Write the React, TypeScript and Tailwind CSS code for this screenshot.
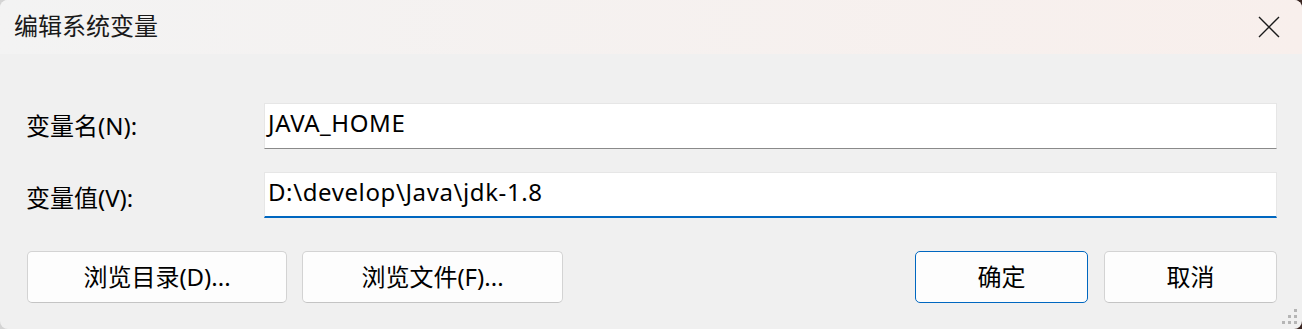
import React from 'react'

const uiFont = {
  fontFamily: '"Noto Sans", "Noto Sans CJK SC", sans-serif',
}

function CloseIcon() {
  return (
    <svg width="22" height="22" viewBox="0 0 22 22" className="text-[#1a1a1a]">
      <path d="M1 1 L21 21 M21 1 L1 21" stroke="currentColor" strokeWidth="1.4" fill="none" />
    </svg>
  )
}

function Field({ value, focused }: { value: string; focused?: boolean }) {
  return (
    <div
      className={
        'flex-1 h-[46px] bg-white border border-[#e6e6e6] flex items-center pl-[3px] text-[24px] tracking-[0.6px] text-black ' +
        (focused ? 'border-b-2 border-b-[#0067c0]' : 'border-b-[#8a8a8a]')
      }
    >
      <span className="leading-none -mt-[6px]">{value}</span>
    </div>
  )
}

function Button({ label, primary, className }: { label: string; primary?: boolean; className?: string }) {
  return (
    <button
      className={
        'h-[52px] rounded-[5px] bg-[#fdfdfd] text-[24px] text-black flex items-center justify-center ' +
        (primary ? 'border border-[#0067c0] ' : 'border border-[#d3d3d3] border-b-[#c4c4c4] ') +
        (className ?? '')
      }
    >
      {label}
    </button>
  )
}

export default function App() {
  return (
    <div className="w-[1302px] h-[329px] bg-gradient-to-r from-[#d4d4d4] via-[#9a8f8b] to-[#3a2622]" style={uiFont}>
      <div className="relative w-full h-full rounded-[8px] overflow-hidden bg-[#f0f0f0] flex flex-col">
        {/* Title bar */}
        <div className="h-[54px] shrink-0 bg-gradient-to-r from-[#f3f3f3] to-[#f8efec] flex items-center justify-between pl-[14px] pr-[22px]">
          <span className="text-[24px] text-[#1a1a1a] -mt-[2px]">编辑系统变量</span>
          <CloseIcon />
        </div>

        {/* Body */}
        <div className="flex-1 flex flex-col pt-[49px] pl-[26px] pr-[25px]">
          <div className="flex items-center">
            <span className="w-[238px] text-[24px] text-black -mt-[1px]">变量名(N):</span>
            <Field value="JAVA_HOME" />
          </div>
          <div className="flex items-center mt-[23px]">
            <span className="w-[238px] text-[24px] text-black mt-[5px]">变量值(V):</span>
            <Field value="D:\develop\Java\jdk-1.8" focused />
          </div>

          <div className="flex items-center mt-[33px] pl-[1px]">
            <Button label="浏览目录(D)..." className="w-[260px]" />
            <Button label="浏览文件(F)..." className="w-[261px] ml-[15px]" />
            <div className="flex-1" />
            <Button label="确定" primary className="w-[173px]" />
            <Button label="取消" className="w-[173px] ml-[16px]" />
          </div>
        </div>

        {/* Resize grip */}
        <div className="absolute right-[5px] bottom-[5px] grid grid-cols-3 gap-[3px]">
          <span className="w-[3px] h-[3px]" />
          <span className="w-[3px] h-[3px]" />
          <span className="w-[3px] h-[3px] bg-[#b5b5b5]" />
          <span className="w-[3px] h-[3px]" />
          <span className="w-[3px] h-[3px] bg-[#b5b5b5]" />
          <span className="w-[3px] h-[3px] bg-[#b5b5b5]" />
          <span className="w-[3px] h-[3px] bg-[#b5b5b5]" />
          <span className="w-[3px] h-[3px] bg-[#b5b5b5]" />
          <span className="w-[3px] h-[3px] bg-[#b5b5b5]" />
        </div>
      </div>
    </div>
  )
}
